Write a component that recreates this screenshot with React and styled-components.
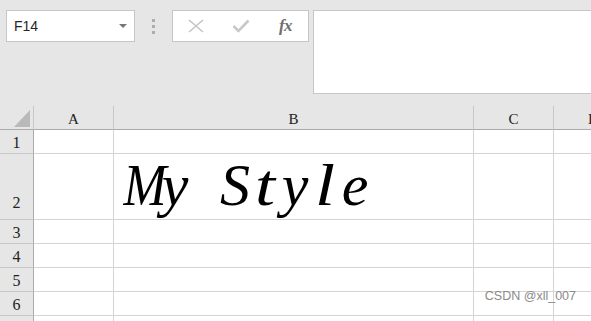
import { Fragment } from 'react'
import styled, { createGlobalStyle } from 'styled-components'

const Global = createGlobalStyle`
	html, body {
		margin: 0;
		padding: 0;
		background: #e6e6e6;
		overflow: hidden;
	}
	body {
		font-family: "Liberation Sans", Arial, sans-serif;
	}
`
const Page = styled.div`
	position: relative;
	width: 591px;
	height: 321px;
	overflow: hidden;
	display: flex;
	flex-direction: column;
`
const TopBar = styled.div`
	height: 106px;
	flex-shrink: 0;
	box-sizing: border-box;
	padding: 10px 0 0 6px;
	display: flex;
	align-items: flex-start;
`
const NameBox = styled.div`
	width: 129px;
	height: 32px;
	box-sizing: border-box;
	background: #fff;
	border: 1px solid #c6c6c6;
	display: flex;
	align-items: center;
	justify-content: space-between;
	padding: 0 7px 0 7px;
	font-size: 14px;
	color: #262626;
`
const Caret = styled.span`
	width: 0;
	height: 0;
	border-left: 4px solid transparent;
	border-right: 4px solid transparent;
	border-top: 4px solid #777;
`
const Grip = styled.div`
	width: 37px;
	height: 32px;
	display: flex;
	flex-direction: column;
	align-items: center;
	justify-content: center;
	gap: 3px;
	span {
		width: 3px;
		height: 3px;
		background: #adadad;
	}
`
const FxButtons = styled.div`
	width: 137px;
	height: 32px;
	box-sizing: border-box;
	background: #fff;
	border: 1px solid #c6c6c6;
	display: grid;
	grid-template-columns: 45px 45px 45px;
	align-items: center;
	justify-items: center;
`
const Fx = styled.span`
	font-family: "Liberation Serif", "Times New Roman", serif;
	font-style: italic;
	font-weight: bold;
	font-size: 17px;
	color: #6e6e6e;
	letter-spacing: -0.5px;
`
const FormulaBar = styled.div`
	flex: 1;
	margin-left: 4px;
	margin-right: -2px;
	height: 84px;
	box-sizing: border-box;
	background: #fff;
	border: 1px solid #c6c6c6;
`
const Sheet = styled.div`
	display: grid;
	grid-template-columns: 34px 80px 360px 80px 80px;
	grid-template-rows: 24px 24px 66px repeat(5, 24px);
	background: #fff;
	font-family: "Liberation Serif", "Times New Roman", serif;
	color: #222;
`
const Corner = styled.div`
	background: #e6e6e6;
	border-right: 1px solid #c8c8c8;
	border-bottom: 1px solid #ababab;
	box-sizing: border-box;
	position: relative;
	&::after {
		content: '';
		position: absolute;
		left: 14px;
		top: 4px;
		width: 0;
		height: 0;
		border-left: 16px solid transparent;
		border-bottom: 17px solid #b9b9b9;
	}
`
const ColHead = styled.div`
	background: #e6e6e6;
	border-right: 1px solid #c8c8c8;
	border-bottom: 1px solid #ababab;
	box-sizing: border-box;
	display: flex;
	align-items: flex-end;
	justify-content: center;
	padding-bottom: 2px;
	font-size: 15px;
	line-height: 15px;
`
const RowHead = styled.div`
	background: #e6e6e6;
	border-right: 1px solid #ababab;
	border-bottom: 1px solid #c8c8c8;
	box-sizing: border-box;
	display: flex;
	align-items: flex-end;
	justify-content: center;
	padding-bottom: ${p => p.$pad}px;
	font-size: 16px;
	line-height: 16px;
`
const Cell = styled.div`
	border-right: 1px solid #d4d4d4;
	border-bottom: 1px solid #d4d4d4;
	box-sizing: border-box;
	position: relative;
`
const BigText = styled.div`
	position: absolute;
	left: 16px;
	bottom: 4px;
	display: flex;
	font-family: "Liberation Serif", "Times New Roman", serif;
	font-style: italic;
	font-size: 60px;
	line-height: 60px;
	color: #000;
	white-space: pre;
`
const Char = styled.span`
	display: inline-flex;
	justify-content: center;
	width: 30px;
	flex-shrink: 0;
	transform: scaleX(${p => p.$sx || 1});
`
const Watermark = styled.div`
	position: absolute;
	right: 15px;
	bottom: 18px;
	font-family: "Liberation Sans", Arial, sans-serif;
	font-size: 12.5px;
	color: #8a8a8a;
`

const cols = ['A', 'B', 'C', 'D']
const rows = [
	{ n: 1, pad: 2 },
	{ n: 2, pad: 8 },
	{ n: 3, pad: 2 },
	{ n: 4, pad: 2 },
	{ n: 5, pad: 2 },
	{ n: 6, pad: 2 },
	{ n: 7, pad: 2 },
]
const glyphs = [
	{ ch: 'M', sx: 0.86 },
	{ ch: 'y' },
	{ ch: ' ' },
	{ ch: 'S' },
	{ ch: 't', sx: 1.2 },
	{ ch: 'y' },
	{ ch: 'l', sx: 1.2 },
	{ ch: 'e' },
]

export default function App() {
	return (
		<Page>
			<Global />
			<TopBar>
				<NameBox>
					<span>F14</span>
					<Caret />
				</NameBox>
				<Grip>
					<span />
					<span />
					<span />
				</Grip>
				<FxButtons>
					<svg width="16" height="14" viewBox="0 0 16 14">
						<path d="M1 1 L15 13 M15 1 L1 13" stroke="#c4c4c4" strokeWidth="1.6" fill="none" />
					</svg>
					<svg width="18" height="14" viewBox="0 0 18 14">
						<path d="M1.5 7 L6.5 12 L16.5 1.5" stroke="#c8c8c8" strokeWidth="2.6" fill="none" />
					</svg>
					<Fx>fx</Fx>
				</FxButtons>
				<FormulaBar />
			</TopBar>
			<Sheet>
				<Corner />
				{cols.map(c => (
					<ColHead key={c}>{c}</ColHead>
				))}
				{rows.map(r => (
					<Fragment key={r.n}>
						<RowHead $pad={r.pad}>{r.n}</RowHead>
						{cols.map(c => (
							<Cell key={c}>
								{r.n === 2 && c === 'B' && (
									<BigText>
										{glyphs.map((g, i) => (
											<Char key={i} $sx={g.sx}>{g.ch}</Char>
										))}
									</BigText>
								)}
							</Cell>
						))}
					</Fragment>
				))}
			</Sheet>
			<Watermark>CSDN @xll_007</Watermark>
		</Page>
	)
}
